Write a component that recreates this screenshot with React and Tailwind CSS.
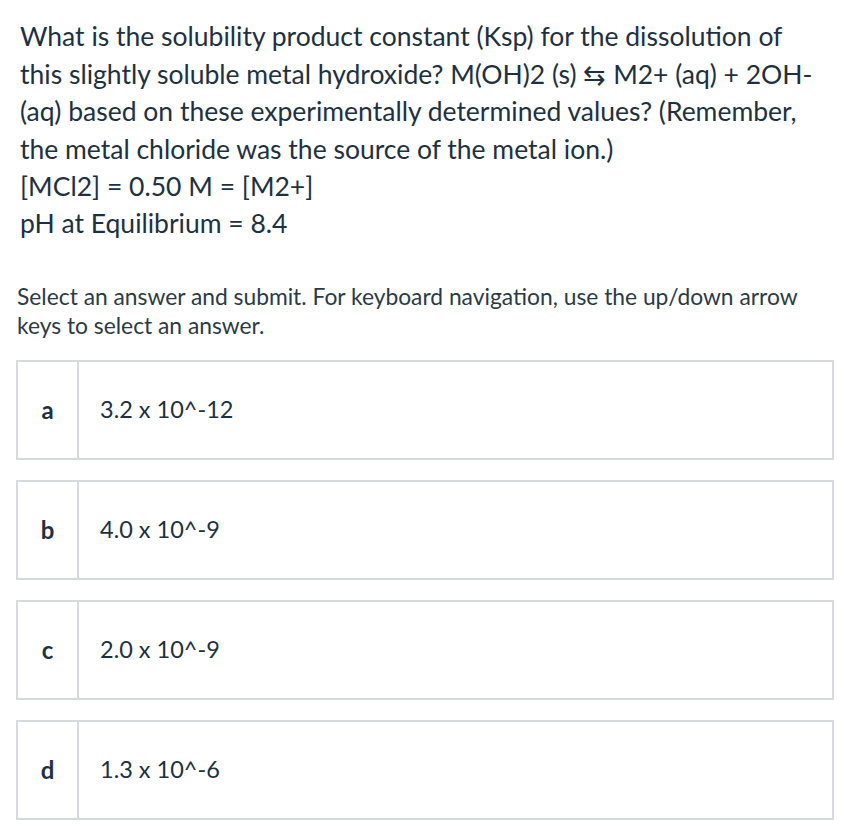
import React from "react";

const answers = [
  { k: "a", v: "3.2 x 10^-12" },
  { k: "b", v: "4.0 x 10^-9" },
  { k: "c", v: "2.0 x 10^-9" },
  { k: "d", v: "1.3 x 10^-6" },
];

export default function App() {
  return (
    <div className="w-[862px] h-[830px] bg-white text-[#1d3142] overflow-hidden" style={{ fontFamily: "Lato, 'Noto Sans', sans-serif" }}>
      <div className="pl-[20px] pt-[18px] text-[26.5px] leading-[37.5px]">
        <div>
          What is the solubility product constant (Ksp) for the dissolution of<br />
          this slightly soluble metal hydroxide? M(OH)2 (s) ⇆ M2+ (aq) + 2OH-<br />
          (aq) based on these experimentally determined values? (Remember,<br />
          the metal chloride was the source of the metal ion.)
        </div>
        <div>[MCl2] = 0.50 M = [M2+]</div>
        <div className="leading-[35px]">pH at Equilibrium = 8.4</div>
      </div>
      <div className="pl-[17px] mt-[41px] text-[22.8px] leading-[29px] text-[#2b3a47]">
        Select an answer and submit. For keyboard navigation, use the up/down arrow<br />
        keys to select an answer.
      </div>
      <div className="ml-[16px] w-[818px] mt-[20px] flex flex-col gap-[20px]">
        {answers.map((a) => (
          <div key={a.k} className="flex h-[100px] border-2 border-[#d6d9dd]">
            <div className="w-[61px] border-r-2 border-[#d6d9dd] flex items-center justify-center text-[24px] font-bold">
              {a.k}
            </div>
            <div className="flex items-center pl-[21px] text-[23.5px]">{a.v}</div>
          </div>
        ))}
      </div>
    </div>
  );
}
